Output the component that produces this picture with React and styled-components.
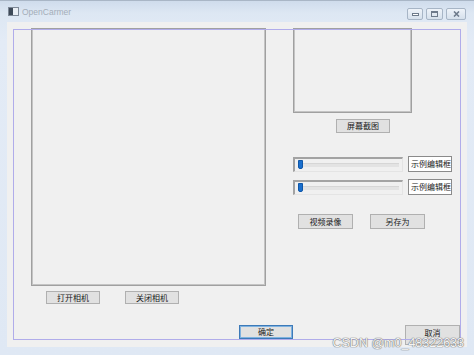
import React from "react";
import styled, { createGlobalStyle } from "styled-components";

const Global = createGlobalStyle`
  html, body { margin: 0; padding: 0; }
  body { width: 474px; height: 355px; overflow: hidden; background: #dce7f4; font-family: "Noto Sans CJK SC", "Noto Sans", sans-serif; }
`;

const Window = styled.div`
  position: relative;
  width: 474px;
  height: 355px;
  box-sizing: border-box;
  background: linear-gradient(#cfdcec 0px, #dde7f3 12px, #e3ebf6 40px, #dfe8f4 100%);
  border-top: 1px solid #a9b6c6;
  display: flex;
  flex-direction: column;
  padding: 0 7px 8px 7px;
`;

const TitleBar = styled.div`
  height: 21px;
  display: flex;
  align-items: center;
  position: relative;
`;

const AppIcon = styled.div`
  width: 9px;
  height: 7px;
  margin-left: 1px;
  border: 1px solid #7d8896;
  background: linear-gradient(90deg, #3e4a58 0 40%, #e9eef4 40% 100%);
`;

const Title = styled.span`
  margin-left: 3px;
  font-family: "Liberation Sans", Arial, sans-serif;
  font-size: 8.5px;
  color: #a4adb8;
`;

const Controls = styled.div`
  margin-left: auto;
  margin-right: 1px;
  margin-top: 3px;
  display: flex;
  gap: 3px;
  align-self: flex-start;
  padding-top: 4px;
`;

const CtrlButton = styled.div`
  width: ${(p) => p.w}px;
  height: 10px;
  border: 1px solid #a7b5c6;
  border-radius: 2px;
  background: linear-gradient(#eef3f9, #d5e0ec);
  display: flex;
  align-items: center;
  justify-content: center;
`;

const Client = styled.div`
  position: relative;
  height: 325px;
  background: #f0f0f0;
  display: flex;
  flex-direction: column;
  padding-top: 6px;
  box-sizing: border-box;
`;

const LayoutFrame = styled.div`
  position: absolute;
  top: 7px;
  left: 6px;
  right: 6px;
  bottom: 7px;
  border: 1px solid #b0acea;
  pointer-events: none;
`;

const Top = styled.div`
  display: flex;
  padding-left: 24px;
  position: relative;
`;

const LeftCol = styled.div`
  width: 235px;
  display: flex;
  flex-direction: column;
`;

const RightCol = styled.div`
  margin-left: 27px;
  display: flex;
  flex-direction: column;
  align-items: flex-start;
`;

const View = styled.div`
  width: ${(p) => p.w}px;
  height: ${(p) => p.h}px;
  box-sizing: border-box;
  border: 1px solid #a0a0a0;
  box-shadow: inset 0 0 0 1px #c4c4c4;
  background: #f0f0f0;
`;

const ButtonRow = styled.div`
  display: flex;
  gap: ${(p) => p.gap}px;
  margin-top: ${(p) => p.mt}px;
  padding-left: ${(p) => p.pl}px;
`;

const Button = styled.div`
  width: ${(p) => p.w || 54}px;
  height: ${(p) => p.h || 14}px;
  box-sizing: border-box;
  margin-left: ${(p) => p.ml || 0}px;
  margin-top: ${(p) => p.mt || 0}px;
  border: 1px solid ${(p) => (p.primary ? "#3d7ab8" : "#b0b0b0")};
  box-shadow: ${(p) => (p.primary ? "inset 0 0 0 1px #7fb2e0" : "none")};
  background: #e1e1e1;
  display: flex;
  align-items: ${(p) => (p.top ? "flex-start" : "center")};
  justify-content: center;
  font-size: 8px;
  line-height: 10px;
  color: #1a1a1a;
  padding-top: ${(p) => (p.top ? 2 : 0)}px;
`;

const SliderRow = styled.div`
  display: flex;
  align-items: center;
  gap: 5px;
  margin-top: ${(p) => p.mt}px;
`;

const Slider = styled.div`
  position: relative;
  width: 110px;
  height: 15px;
  box-sizing: border-box;
  border-top: 2px solid #a3a3a3;
  border-left: 2px solid #a3a3a3;
  border-right: 1px solid #e4e4e4;
  border-bottom: 1px solid #e4e4e4;
  background: #f0f0f0;
  display: flex;
  align-items: center;
  padding: 0 3px;
`;

const Groove = styled.div`
  flex: 1;
  height: 3px;
  background: #e3e3e3;
  border-top: 1px solid #d6d6d6;
`;

const Handle = styled.div`
  position: absolute;
  left: 3px;
  top: 1px;
  width: 5px;
  height: 9px;
  background: #1a6fce;
  border-radius: 0 0 2px 2px;
  border: 1px solid #0f57a8;
  box-sizing: border-box;
`;

const EditBox = styled.div`
  width: 44px;
  height: 16px;
  box-sizing: border-box;
  border: 1px solid #8a8a8a;
  background: #ffffff;
  font-size: 8px;
  line-height: 14px;
  padding-left: 2px;
  color: #1a1a1a;
  white-space: nowrap;
  overflow: hidden;
`;

const Bottom = styled.div`
  margin-top: auto;
  display: flex;
  justify-content: space-between;
  align-items: flex-start;
  padding: 0 7px 2px 232px;
  height: 20px;
`;

const Watermark = styled.div`
  position: absolute;
  right: 10px;
  bottom: 5px;
  font-family: "Liberation Sans", Arial, sans-serif;
  font-size: 12.5px;
  color: #f4f4f4;
  text-shadow: 0 0 1px #777, 0 0 1px #777, 0 0 1px #999;
  pointer-events: none;
`;

export default function App() {
  return (
    <>
      <Global />
      <Window>
        <TitleBar>
          <AppIcon />
          <Title>OpenCarmer</Title>
          <Controls>
            <CtrlButton w={14}>
              <svg width="7" height="3"><rect x="0.5" y="0.5" width="6" height="2" fill="#fff" stroke="#6d7a8b" /></svg>
            </CtrlButton>
            <CtrlButton w={15}>
              <svg width="7" height="6"><rect x="0.5" y="0.5" width="6" height="5" fill="none" stroke="#6d7a8b" /><rect x="1" y="1" width="5" height="1" fill="#6d7a8b" /></svg>
            </CtrlButton>
            <CtrlButton w={18}>
              <svg width="7" height="6"><path d="M1 0.5 L6 5.5 M6 0.5 L1 5.5" stroke="#6d7a8b" strokeWidth="1.6" /></svg>
            </CtrlButton>
          </Controls>
        </TitleBar>
        <Client>
          <Top>
            <LeftCol>
              <View w={235} h={258} />
              <ButtonRow mt={5} pl={15} gap={25}>
                <Button h={13}>打开相机</Button>
                <Button h={13}>关闭相机</Button>
              </ButtonRow>
            </LeftCol>
            <RightCol>
              <View w={119} h={85} />
              <Button ml={43} mt={6}>屏幕截图</Button>
              <SliderRow mt={23}>
                <Slider>
                  <Groove />
                  <Handle />
                </Slider>
                <EditBox>示例编辑框</EditBox>
              </SliderRow>
              <SliderRow mt={7}>
                <Slider>
                  <Groove />
                  <Handle />
                </Slider>
                <EditBox>示例编辑框</EditBox>
              </SliderRow>
              <ButtonRow mt={19} pl={5} gap={17}>
                <Button w={55} h={15}>视频录像</Button>
                <Button w={55} h={15}>另存为</Button>
              </ButtonRow>
            </RightCol>
          </Top>
          <Bottom>
            <Button primary>确定</Button>
            <Button w={55} h={20} top>取消</Button>
          </Bottom>
          <LayoutFrame />
        </Client>
        <Watermark>CSDN @m0_48322633</Watermark>
      </Window>
    </>
  );
}
